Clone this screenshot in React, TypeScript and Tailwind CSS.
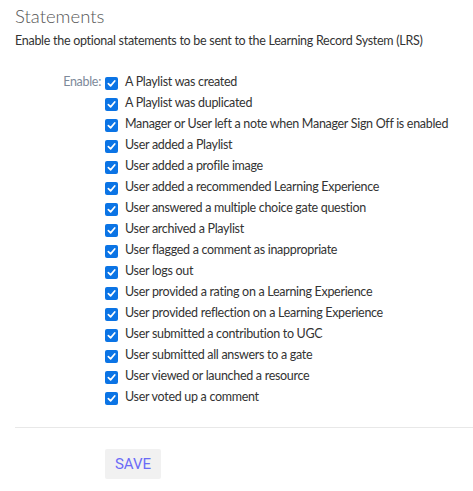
import React from "react";

const items = [
  "A Playlist was created",
  "A Playlist was duplicated",
  "Manager or User left a note when Manager Sign Off is enabled",
  "User added a Playlist",
  "User added a profile image",
  "User added a recommended Learning Experience",
  "User answered a multiple choice gate question",
  "User archived a Playlist",
  "User flagged a comment as inappropriate",
  "User logs out",
  "User provided a rating on a Learning Experience",
  "User provided reflection on a Learning Experience",
  "User submitted a contribution to UGC",
  "User submitted all answers to a gate",
  "User viewed or launched a resource",
  "User voted up a comment",
];

function Check() {
  return (
    <span className="w-[13px] h-[13px] rounded-[2px] bg-[#0b74e5] flex items-center justify-center shrink-0">
      <svg width="9" height="9" viewBox="0 0 10 10">
        <path d="M1.5 5.2 L4 7.6 L8.6 2.2" fill="none" stroke="white" strokeWidth="1.9" strokeLinecap="round" strokeLinejoin="round" />
      </svg>
    </span>
  );
}

export default function App() {
  return (
    <div className="w-[473px] h-[491px] bg-white overflow-hidden" style={{ fontFamily: "Lato, sans-serif" }}>
      <div className="pl-[15px] pt-[4px]">
        <h1 className="text-[18.5px] font-light text-[#555] leading-[24px]">Statements</h1>
        <p className="text-[12.5px] tracking-[-0.28px] text-[#333] mt-[5px] leading-[16px]">
          Enable the optional statements to be sent to the Learning Record System (LRS)
        </p>
        <div className="flex mt-[24px]">
          <div className="w-[86px] text-right text-[12.5px] tracking-[-0.3px] text-[#7d8a9a] leading-[18px]">Enable:</div>
          <div className="flex flex-col ml-[4px]">
            {items.map((t) => (
              <label key={t} className="flex items-center h-[21px]">
                <Check />
                <span className="ml-[7px] pb-[3px] text-[12.5px] tracking-[-0.3px] text-[#333]">{t}</span>
              </label>
            ))}
          </div>
        </div>
        <div className="h-px bg-[#e8e8e8] mt-[18px]" />
        <div className="pl-[90px] pt-[21px]">
          <button className="w-[56px] h-[30px] bg-[#f1f1f1] rounded-[2px] text-[#6b6bf7] text-[15px]" style={{ fontFamily: "Roboto, sans-serif" }}>
            SAVE
          </button>
        </div>
      </div>
    </div>
  );
}
